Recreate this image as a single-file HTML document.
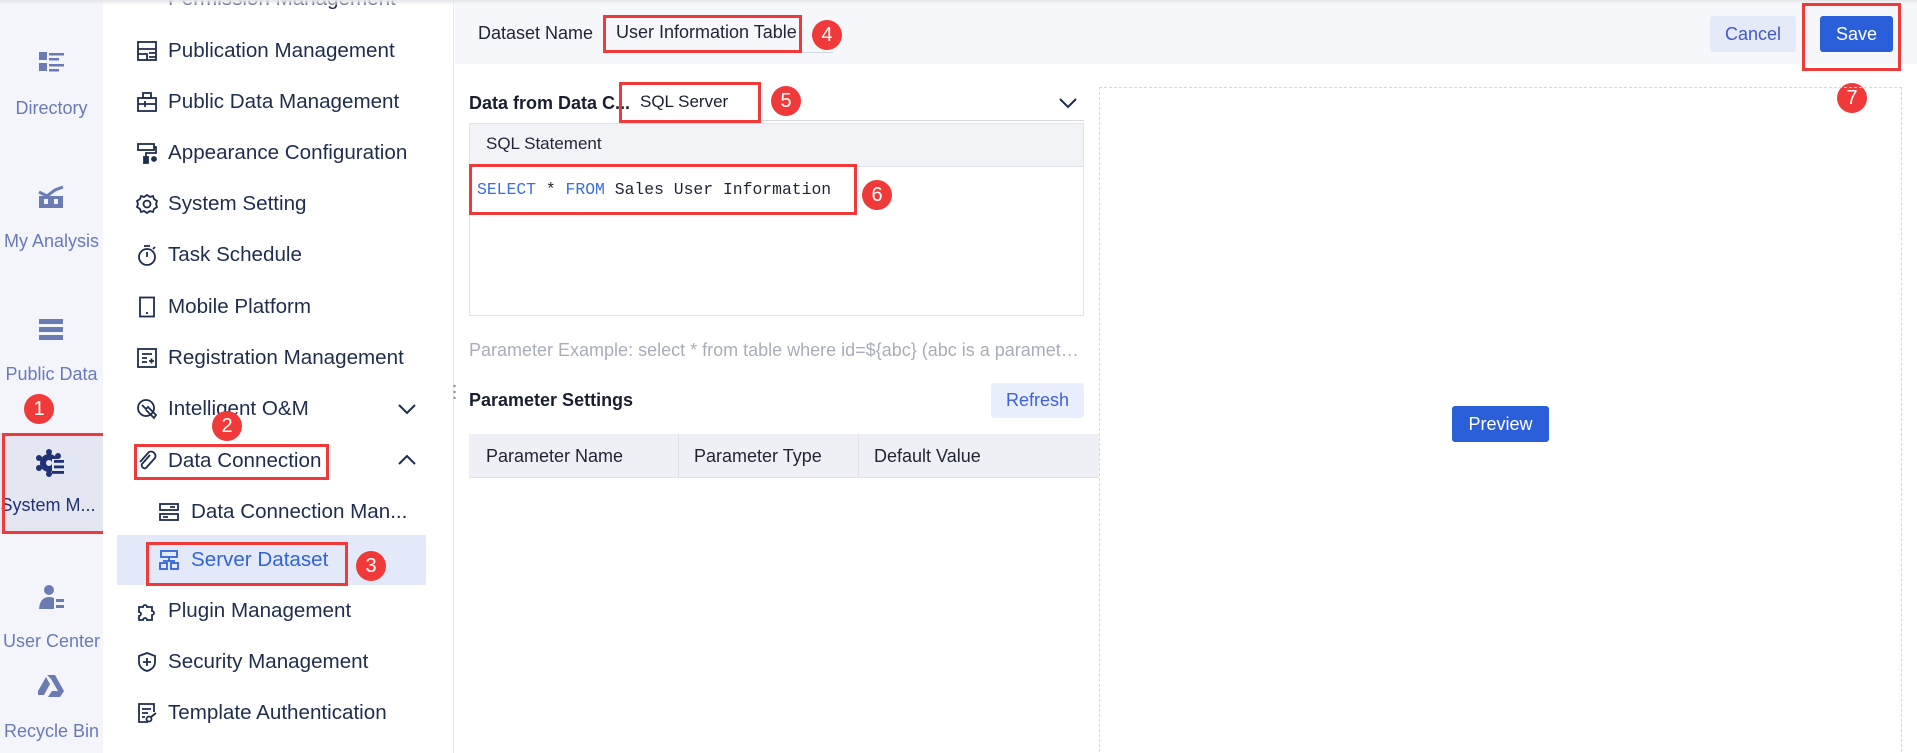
<!DOCTYPE html>
<html><head><meta charset="utf-8"><style>
*{margin:0;padding:0;box-sizing:border-box}
html,body{width:1917px;height:753px;overflow:hidden}
body{background:#fff;font-family:"Liberation Sans",sans-serif;position:relative}
.a{position:absolute}
.rail{left:0;top:0;width:103px;height:753px;background:#f3f5fa}
.rl{position:absolute;left:0;width:103px;text-align:center;font-size:18px;color:#6a7ab8;white-space:nowrap}
.ri{position:absolute;left:36px;width:30px;height:30px}
.menu{left:103px;top:0;width:351px;height:753px;background:#fff;border-right:1px solid #e6e8ef}
.mi{position:absolute;left:168px;font-size:20.6px;color:#1f2d4d;white-space:nowrap;line-height:24px}
.ic{position:absolute;left:136px;width:22px;height:22px}
.badge{position:absolute;width:30px;height:30px;border-radius:50%;background:#f03a3a;color:#fff;font-size:20px;text-align:center;line-height:30px}
.rb{position:absolute;border:3px solid #f03a3a}
</style></head><body>
<div class="a rail"></div>
<div class="a" style="left:0;top:433px;width:103px;height:100px;background:#e4e7f1"></div>
<svg class="ri" style="top:48px" viewBox="0 0 30 30" fill="#6b7cb5"><rect x="3" y="4" width="8" height="8"/><rect x="13" y="5" width="15" height="2.5"/><rect x="13" y="10" width="10" height="2.5"/><rect x="3" y="15" width="8" height="8"/><rect x="13" y="16" width="15" height="2.5"/><rect x="13" y="21" width="10" height="2.5"/></svg>
<div class="rl" style="top:98px">Directory</div>
<svg class="ri" style="top:182px" viewBox="0 0 30 30" fill="#6b7cb5"><rect x="3" y="14" width="24" height="12"/><path d="M3 10 L11 14 L19 8 L27 5" stroke="#6b7cb5" stroke-width="3" fill="none"/><rect x="8" y="17" width="4" height="5" fill="#f3f5fa"/><rect x="18" y="17" width="4" height="5" fill="#f3f5fa"/></svg>
<div class="rl" style="top:231px">My Analysis</div>
<svg class="ri" style="top:315px" viewBox="0 0 30 30" fill="#6b7cb5"><rect x="3" y="4" width="24" height="5"/><rect x="3" y="12" width="24" height="5"/><rect x="3" y="20" width="24" height="5"/></svg>
<div class="rl" style="top:364px">Public Data</div>
<svg class="ri" style="top:448px" viewBox="0 0 30 30" fill="#1f3274"><circle cx="13" cy="15" r="9"/><circle cx="13" cy="4" r="3"/><circle cx="13" cy="26" r="3"/><circle cx="3" cy="10" r="3"/><circle cx="3" cy="20" r="3"/><circle cx="22" cy="8" r="3"/><circle cx="13" cy="15" r="3" fill="#e4e7f1"/><rect x="16" y="11" width="13" height="12" fill="#e4e7f1"/><rect x="18" y="12" width="10" height="2.8"/><rect x="18" y="17.5" width="10" height="2.8"/><rect x="16" y="23" width="12" height="2.8"/></svg>
<div class="rl" style="top:495px;color:#1f3274;left:-8px;width:112px">System M...</div>
<svg class="ri" style="top:582px" viewBox="0 0 30 30" fill="#6b7cb5"><circle cx="13" cy="8" r="5"/><path d="M3 27 Q4 15 13 15 Q16 15 18 16 L18 27Z"/><rect x="20" y="17" width="8" height="3"/><rect x="20" y="23" width="8" height="3"/></svg>
<div class="rl" style="top:631px">User Center</div>
<svg class="ri" style="top:671px" viewBox="0 0 30 30" fill="#6b7cb5"><path d="M11 4 L19 4 L28 20 L24 26 L12 26 L16 20 L22 20 L15 8Z"/><path d="M10 6 L14 13 L8 24 L2 24 L2 20Z"/></svg>
<div class="rl" style="top:721px">Recycle Bin</div>
<div class="rb" style="left:2px;top:433px;width:104px;height:101px"></div>
<div class="badge" style="left:24px;top:394px">1</div>

<div class="a menu"></div>
<div class="mi" style="top:-13px;color:#1f2d4d">Permission Management</div>
<div class="a" style="left:0;top:0;width:1917px;height:5px;background:linear-gradient(#e4e5ea,rgba(255,255,255,0.3))"></div>
<svg class="ic" style="top:40px" viewBox="0 0 22 22" fill="none" stroke="#1f2d4d" stroke-width="1.8"><rect x="2" y="2" width="18" height="18"/><path d="M2 9h18M2 14h9v6M13 13h7M13 17h7"/></svg>
<div class="mi" style="top:39px">Publication Management</div>
<svg class="ic" style="top:91px" viewBox="0 0 22 22" fill="none" stroke="#1f2d4d" stroke-width="1.8"><rect x="2" y="7" width="18" height="13"/><rect x="7" y="2" width="8" height="5"/><path d="M2 13h18M9 10v6"/></svg>
<div class="mi" style="top:90px">Public Data Management</div>
<svg class="ic" style="top:142px" viewBox="0 0 22 22" fill="none" stroke="#1f2d4d" stroke-width="1.8"><rect x="2" y="2" width="16" height="6"/><path d="M18 5h2v6h-10v4"/><rect x="8" y="15" width="4" height="6" fill="#1f2d4d"/><circle cx="18" cy="17" r="2" fill="#1f2d4d"/></svg>
<div class="mi" style="top:141px">Appearance Configuration</div>
<svg class="ic" style="top:193px" viewBox="0 0 22 22" fill="none" stroke="#1f2d4d" stroke-width="1.8"><path d="M11 2l3 2 3-1 1 3 3 2-1 3 1 3-3 2-1 3-3-1-3 2-3-2-3 1-1-3-3-2 1-3-1-3 3-2 1-3 3 1z"/><circle cx="11" cy="11" r="3.5"/></svg>
<div class="mi" style="top:192px">System Setting</div>
<svg class="ic" style="top:244px" viewBox="0 0 22 22" fill="none" stroke="#1f2d4d" stroke-width="1.8"><circle cx="11" cy="13" r="8"/><path d="M8 2h6M11 13V8M17 5l2-2"/></svg>
<div class="mi" style="top:243px">Task Schedule</div>
<svg class="ic" style="top:296px" viewBox="0 0 22 22" fill="none" stroke="#1f2d4d" stroke-width="1.8"><rect x="4" y="1.5" width="14" height="19"/><path d="M10 17h2"/></svg>
<div class="mi" style="top:295px">Mobile Platform</div>
<svg class="ic" style="top:347px" viewBox="0 0 22 22" fill="none" stroke="#1f2d4d" stroke-width="1.8"><rect x="2" y="2" width="18" height="18"/><path d="M6 7h10M6 11h5M6 15h5M13 14h5M15.5 11.5v5"/></svg>
<div class="mi" style="top:346px">Registration Management</div>
<svg class="ic" style="top:398px" viewBox="0 0 22 22" fill="none" stroke="#1f2d4d" stroke-width="1.8"><circle cx="10" cy="10" r="8"/><path d="M6 7l4 4 2-2 8 8-2 3-8-8"/></svg>
<div class="mi" style="top:397px">Intelligent O&amp;M</div>
<svg class="a" style="left:397px;top:403px" width="20" height="12" viewBox="0 0 20 12" fill="none" stroke="#1f2d4d" stroke-width="2"><path d="M2 2l8 8 8-8"/></svg>
<svg class="ic" style="top:450px" viewBox="0 0 22 22" fill="none" stroke="#1f2d4d" stroke-width="1.8"><path d="M14 5l-8 9a3 3 0 004 4l9-10a4.5 4.5 0 00-6-6l-9 10"/></svg>
<div class="mi" style="top:449px">Data Connection</div>
<svg class="a" style="left:397px;top:454px" width="20" height="12" viewBox="0 0 20 12" fill="none" stroke="#1f2d4d" stroke-width="2"><path d="M2 10l8-8 8 8"/></svg>
<svg class="ic" style="left:158px;top:501px" viewBox="0 0 22 22" fill="none" stroke="#1f2d4d" stroke-width="1.8"><rect x="2" y="3" width="18" height="6"/><rect x="2" y="13" width="18" height="6"/><path d="M12 6h5M5 16h5"/></svg>
<div class="mi" style="left:191px;top:500px">Data Connection Man...</div>
<div class="a" style="left:117px;top:535px;width:309px;height:50px;background:#e3e9f8"></div>
<svg class="ic" style="left:158px;top:549px" viewBox="0 0 22 22" fill="none" stroke="#3163d9" stroke-width="1.8"><rect x="3" y="2" width="16" height="6"/><path d="M11 8v4M5 12h12"/><rect x="2" y="14" width="7" height="6"/><rect x="13" y="14" width="7" height="6"/></svg>
<div class="mi" style="left:191px;top:548px;color:#3163d9">Server Dataset</div>
<svg class="ic" style="top:600px" viewBox="0 0 22 22" fill="none" stroke="#1f2d4d" stroke-width="1.8"><path d="M3 7h4a2 2 0 114 0h5v4a2 2 0 110 4v5H11a2 2 0 10-4 0H3v-4a2 2 0 100-4z"/></svg>
<div class="mi" style="top:599px">Plugin Management</div>
<svg class="ic" style="top:651px" viewBox="0 0 22 22" fill="none" stroke="#1f2d4d" stroke-width="1.8"><path d="M11 2l8 3v6c0 5-4 8-8 9-4-1-8-4-8-9V5z"/><path d="M11 7v8M7 11h8"/></svg>
<div class="mi" style="top:650px">Security Management</div>
<svg class="ic" style="top:702px" viewBox="0 0 22 22" fill="none" stroke="#1f2d4d" stroke-width="1.8"><path d="M12 20H3V2h15v8"/><path d="M6 7h9M6 11h6M6 15h3"/><circle cx="13" cy="17" r="2.5"/><path d="M15 15l5-4"/></svg>
<div class="mi" style="top:701px">Template Authentication</div>
<div class="a" style="left:453px;top:383px;width:3px;height:16px;background:radial-gradient(circle,#8a93a8 1px,transparent 1.5px) 0 0/3px 6px"></div>
<div class="rb" style="left:134px;top:444px;width:195px;height:36px"></div>
<div class="badge" style="left:212px;top:411px">2</div>
<div class="rb" style="left:146px;top:542px;width:202px;height:44px"></div>
<div class="badge" style="left:356px;top:551px">3</div>

<!-- header -->
<div class="a" style="left:455px;top:4px;width:1462px;height:60px;background:#f6f7fb"></div>
<div class="a" style="left:478px;top:23px;font-size:18px;color:#1f2533">Dataset Name</div>
<div class="a" style="left:610px;top:52px;width:223px;height:1px;background:#d5d8e0"></div>
<div class="a" style="left:616px;top:22px;font-size:18px;color:#1f2533">User Information Table</div>
<div class="rb" style="left:603px;top:15px;width:199px;height:38px"></div>
<div class="badge" style="left:812px;top:20px">4</div>
<div class="a" style="left:1710px;top:16px;width:86px;height:36px;background:#e4eaf7;border-radius:3px;color:#4458c6;font-size:18px;text-align:center;line-height:36px">Cancel</div>
<div class="a" style="left:1820px;top:16px;width:73px;height:36px;background:#2b5fd9;border-radius:3px;color:#fff;font-size:18px;text-align:center;line-height:36px">Save</div>
<div class="rb" style="left:1802px;top:3px;width:99px;height:68px"></div>
<div class="badge" style="left:1837px;top:83px">7</div>

<!-- left form -->
<div class="a" style="left:469px;top:93px;font-size:18px;font-weight:bold;color:#1a1f2e">Data from Data C...</div>
<div class="a" style="left:640px;top:92px;font-size:17px;color:#1a1f2e">SQL Server</div>
<div class="a" style="left:761px;top:120px;width:323px;height:1px;background:#d5d8e0"></div>
<svg class="a" style="left:1058px;top:97px" width="20" height="12" viewBox="0 0 20 12" fill="none" stroke="#1f2d4d" stroke-width="2"><path d="M2 2l8 8 8-8"/></svg>
<div class="rb" style="left:619px;top:82px;width:142px;height:41px"></div>
<div class="badge" style="left:771px;top:86px">5</div>
<div class="a" style="left:469px;top:123px;width:615px;height:193px;border:1px solid #e0e3ea"></div>
<div class="a" style="left:470px;top:124px;width:613px;height:43px;background:#f2f3f7;border-bottom:1px solid #e0e3ea"></div>
<div class="a" style="left:486px;top:134px;font-size:17px;color:#1f2533">SQL Statement</div>
<div class="a" style="left:477px;top:180px;font-family:'Liberation Mono',monospace;font-size:16.4px;color:#1f2533;white-space:pre"><span style="color:#3a6fe0">SELECT</span> * <span style="color:#3a6fe0">FROM</span> Sales User Information</div>
<div class="rb" style="left:469px;top:164px;width:388px;height:51px"></div>
<div class="badge" style="left:862px;top:180px">6</div>
<div class="a" style="left:469px;top:340px;width:612px;font-size:18px;color:#a9adb8;white-space:nowrap;overflow:hidden;text-overflow:ellipsis">Parameter Example: select * from table where id=${abc} (abc is a parameter)</div>
<div class="a" style="left:469px;top:390px;font-size:18px;font-weight:bold;color:#1a1f2e">Parameter Settings</div>
<div class="a" style="left:991px;top:383px;width:93px;height:35px;background:#e8eefb;border-radius:3px;color:#3f62d6;font-size:18px;text-align:center;line-height:35px">Refresh</div>
<div class="a" style="left:469px;top:434px;width:630px;height:44px;background:#eef0f5;border-bottom:1px solid #dfe2e9"></div>
<div class="a" style="left:678px;top:434px;width:1px;height:44px;background:#dfe2e9"></div>
<div class="a" style="left:858px;top:434px;width:1px;height:44px;background:#dfe2e9"></div>
<div class="a" style="left:486px;top:446px;font-size:18px;color:#1f2533">Parameter Name</div>
<div class="a" style="left:694px;top:446px;font-size:18px;color:#1f2533">Parameter Type</div>
<div class="a" style="left:874px;top:446px;font-size:18px;color:#1f2533">Default Value</div>

<!-- preview -->
<div class="a" style="left:1099px;top:87px;width:803px;height:700px;border:1px dashed #d6d8dd"></div>
<div class="a" style="left:1452px;top:406px;width:97px;height:36px;background:#2b5fd9;border-radius:3px;color:#fff;font-size:18px;text-align:center;line-height:36px">Preview</div>
</body></html>
